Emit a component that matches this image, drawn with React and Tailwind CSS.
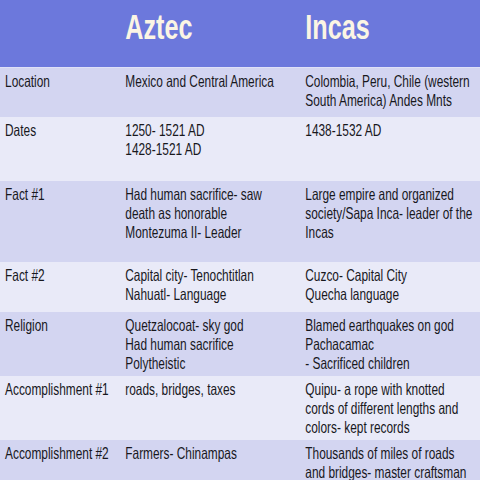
const rows = [
  {
    label: 'Location',
    aztec: ['Mexico and Central America'],
    incas: ['Colombia, Peru, Chile (western', 'South America) Andes Mnts'],
    h: 'h-[49px]',
    bg: 'bg-[#d3d5f1]',
  },
  {
    label: 'Dates',
    aztec: ['1250- 1521 AD', '1428-1521 AD'],
    incas: ['1438-1532 AD'],
    h: 'h-[64px]',
    bg: 'bg-[#e9eaf8]',
  },
  {
    label: 'Fact #1',
    aztec: ['Had human sacrifice- saw', 'death as honorable', 'Montezuma II- Leader'],
    incas: ['Large empire and organized', 'society/Sapa Inca- leader of the', 'Incas'],
    h: 'h-[81px]',
    bg: 'bg-[#d3d5f1]',
  },
  {
    label: 'Fact #2',
    aztec: ['Capital city- Tenochtitlan', 'Nahuatl- Language'],
    incas: ['Cuzco- Capital City', 'Quecha language'],
    h: 'h-[50px]',
    bg: 'bg-[#e9eaf8]',
  },
  {
    label: 'Religion',
    aztec: ['Quetzalocoat- sky god', 'Had human sacrifice', 'Polytheistic'],
    incas: ['Blamed earthquakes on god', 'Pachacamac', '- Sacrificed children'],
    h: 'h-[64px]',
    bg: 'bg-[#d3d5f1]',
  },
  {
    label: 'Accomplishment #1',
    aztec: ['roads, bridges, taxes'],
    incas: ['Quipu- a rope with knotted', 'cords of different lengths and', 'colors- kept records'],
    h: 'h-[64px]',
    bg: 'bg-[#e9eaf8]',
  },
  {
    label: 'Accomplishment #2',
    aztec: ['Farmers- Chinampas'],
    incas: ['Thousands of miles of roads', 'and bridges- master craftsman'],
    h: 'h-[60px]',
    bg: 'bg-[#d3d5f1]',
  },
];

// the slide is squeezed sideways, so the table is laid out wider and scaled back to 480px
function Cell({ lines }) {
  return (
    <div className="pl-[7px] pt-1 whitespace-nowrap">
      {lines.map((l, i) => (
        <p key={i}>{l}</p>
      ))}
    </div>
  );
}

export default function App() {
  return (
    <div className="w-[480px] h-[480px] overflow-hidden bg-[#e9eaf8]">
      <div
        className="w-[667px] origin-top-left scale-x-[0.72] text-[#18181d] text-[16.5px] leading-[19px]"
        style={{ fontFamily: '"Liberation Sans", Arial, sans-serif' }}
      >
        <div className="grid grid-cols-[167px_250px_1fr] h-[68px] bg-[#6c78dc] border-b border-[#dfe1f7] text-[#fbf5e4] font-bold text-[35px] leading-none">
          <div />
          <div className="pl-[7px] pt-[9px]">Aztec</div>
          <div className="pl-[7px] pt-[9px]">Incas</div>
        </div>
        {rows.map((r) => (
          <div key={r.label} className={`grid grid-cols-[167px_250px_1fr] ${r.h} ${r.bg}`}>
            <Cell lines={[r.label]} />
            <Cell lines={r.aztec} />
            <Cell lines={r.incas} />
          </div>
        ))}
      </div>
    </div>
  );
}
